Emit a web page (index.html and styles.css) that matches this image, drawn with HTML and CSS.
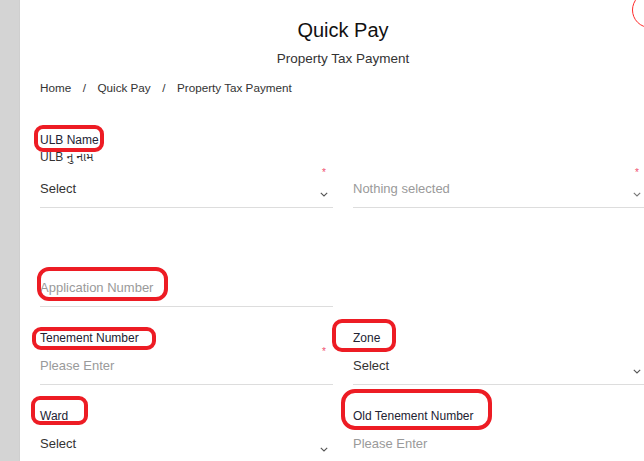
FILE: index.html
```html
<!DOCTYPE html>
<html lang="en">
<head>
<meta charset="utf-8">
<title>Quick Pay - Property Tax Payment</title>
<link rel="stylesheet" href="styles.css">
</head>
<body>
<div class="shell">
  <div class="rail"></div>
  <main class="page">
    <h1 class="title">Quick Pay</h1>
    <p class="subtitle">Property Tax Payment</p>
    <nav class="crumbs">
      <span>Home</span><span class="sep">/</span><span>Quick Pay</span><span class="sep">/</span><span>Property Tax Payment</span>
    </nav>

    <form class="grid">
      <div class="field">
        <div class="label">ULB Name</div>
        <div class="label label-alt">ULB નુ નામ</div>
        <div class="control">
          <span class="value">Select</span>
          <span class="req">*</span>
          <svg class="chev" width="8" height="5" viewBox="0 0 8 5"><polyline points="0.8,0.8 4,4 7.2,0.8" fill="none" stroke="#555" stroke-width="1.1"/></svg>
        </div>
      </div>
      <div class="field">
        <div class="control">
          <span class="value placeholder">Nothing selected</span>
          <span class="req">*</span>
          <svg class="chev" width="8" height="5" viewBox="0 0 8 5"><polyline points="0.8,0.8 4,4 7.2,0.8" fill="none" stroke="#777" stroke-width="1.1"/></svg>
        </div>
      </div>

      <div class="field field-spaced">
        <div class="control">
          <span class="value placeholder">Application Number</span>
        </div>
      </div>
      <div class="field"></div>

      <div class="field">
        <div class="label">Tenement Number</div>
        <div class="control">
          <span class="value placeholder">Please Enter</span>
          <span class="req req-low">*</span>
        </div>
      </div>
      <div class="field">
        <div class="label">Zone</div>
        <div class="control">
          <span class="value">Select</span>
          <svg class="chev" width="8" height="5" viewBox="0 0 8 5"><polyline points="0.8,0.8 4,4 7.2,0.8" fill="none" stroke="#555" stroke-width="1.1"/></svg>
        </div>
      </div>

      <div class="field">
        <div class="label">Ward</div>
        <div class="control">
          <span class="value">Select</span>
          <svg class="chev" width="8" height="5" viewBox="0 0 8 5"><polyline points="0.8,0.8 4,4 7.2,0.8" fill="none" stroke="#555" stroke-width="1.1"/></svg>
        </div>
      </div>
      <div class="field">
        <div class="label">Old Tenement Number</div>
        <div class="control">
          <span class="value placeholder">Please Enter</span>
        </div>
      </div>
    </form>
  </main>
</div>

<div class="marks">
  <div class="mark mark-ulb"></div>
  <div class="mark mark-app"></div>
  <div class="mark mark-ten"></div>
  <div class="mark mark-zone"></div>
  <div class="mark mark-ward"></div>
  <div class="mark mark-old"></div>
  <div class="ring"></div>
</div>
</body>
</html>
```

FILE: styles.css
```css
html, body {
  margin: 0;
  padding: 0;
  overflow: hidden;
  background: #ffffff;
}

body {
  font-family: "Liberation Sans", "Noto Sans Gujarati", "Noto Sans", sans-serif;
  color: #333333;
  position: relative;
  width: 644px;
  height: 461px;
}

.shell {
  display: flex;
  min-height: 461px;
}

.rail {
  width: 20px;
  flex-shrink: 0;
  background: #d4d4d4;
  box-shadow: inset -1px 0 0 #cfcfcf;
}

.page {
  width: 646px;
  flex-shrink: 0;
  box-sizing: border-box;
  padding: 18px 20px 0;
  background: #ffffff;
}

.title {
  margin: 0;
  font-size: 20px;
  line-height: 24px;
  font-weight: normal;
  text-align: center;
  color: #111111;
}

.subtitle {
  margin: 8px 0 0;
  font-size: 13.5px;
  line-height: 18px;
  text-align: center;
  color: #333333;
}

.crumbs {
  margin-top: 12px;
  display: flex;
  font-size: 11.7px;
  line-height: 16px;
  color: #333333;
}

.crumbs .sep {
  padding: 0 11.5px;
}

.grid {
  margin-top: 33px;
  display: grid;
  grid-template-columns: 293px 293px;
  column-gap: 20px;
  row-gap: 20px;
  align-items: end;
}

.field-spaced {
  padding-top: 39px;
}

.label {
  padding-top: 4px;
  font-size: 12px;
  line-height: 14px;
  color: #222233;
}

.label-alt {
  padding-top: 0;
  line-height: 21px;
  color: #333333;
}

.control {
  position: relative;
  box-sizing: border-box;
  height: 40px;
  padding-top: 12px;
  border-bottom: 1px solid #dddddd;
}

.value {
  display: block;
  font-size: 13px;
  line-height: 18px;
  color: #333333;
}

.value.placeholder {
  color: #9a9a9a;
}

.req {
  position: absolute;
  top: 0;
  right: 7px;
  font-size: 10px;
  line-height: 10px;
  color: #f0506e;
}

.req-low {
  top: 2px;
}

.chev {
  position: absolute;
  right: 5px;
  top: 24px;
}

.marks {
  position: absolute;
  inset: 0;
  pointer-events: none;
  overflow: hidden;
}

.mark {
  position: absolute;
  box-sizing: border-box;
  border: 4px solid #ed1c24;
  border-radius: 9px;
}

.mark-ulb  { left: 34px;  top: 125px; width: 70px;  height: 27px; }
.mark-app  { left: 37px;  top: 267px; width: 131px; height: 34px; border-radius: 12px; }
.mark-ten  { left: 32px;  top: 327px; width: 124px; height: 23px; }
.mark-zone { left: 332px; top: 319px; width: 64px;  height: 33px; border-radius: 10px; }
.mark-ward { left: 31px;  top: 396px; width: 57px;  height: 29px; }
.mark-old  { left: 341px; top: 389px; width: 151px; height: 41px; border-radius: 14px; }

.ring {
  position: absolute;
  left: 632px;
  top: -8px;
  width: 36px;
  height: 36px;
  box-sizing: border-box;
  border: 1px solid #ff2a2a;
  border-radius: 50%;
}
```
